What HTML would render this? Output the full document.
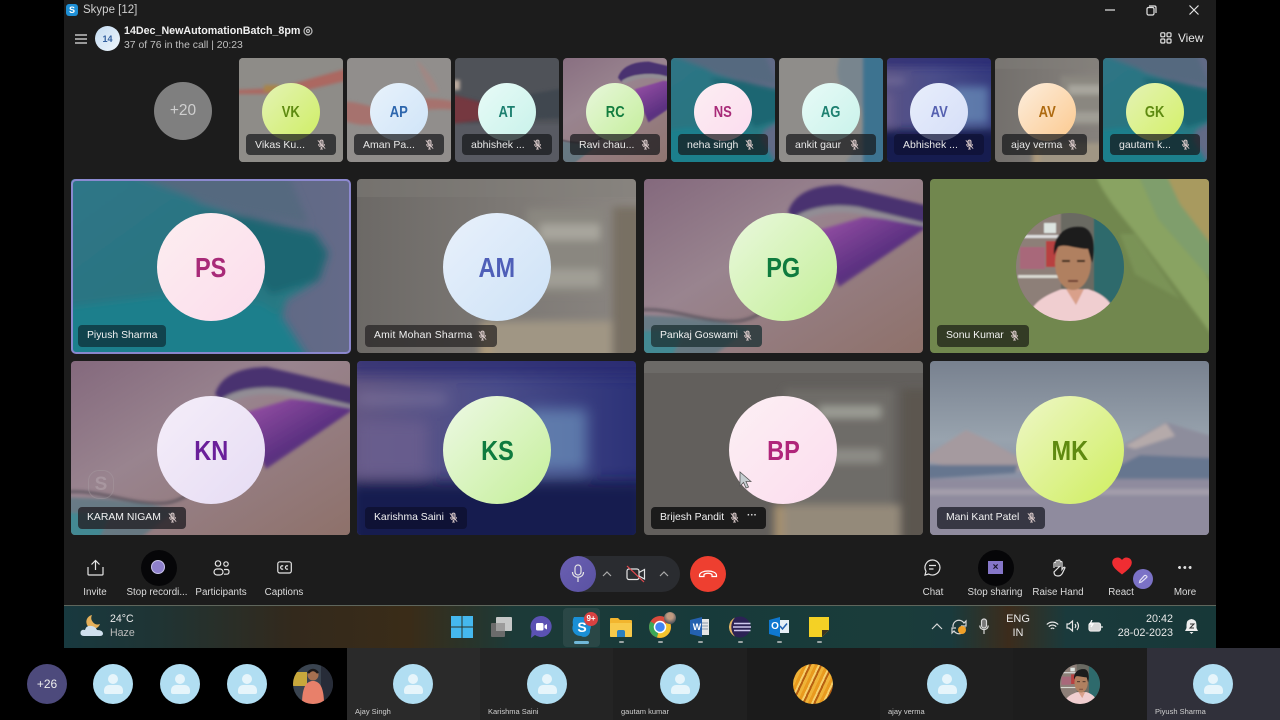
<!DOCTYPE html>
<html><head><meta charset="utf-8"><style>
html,body{margin:0;padding:0;width:1280px;height:720px;overflow:hidden;background:#000;font-family:"Liberation Sans",sans-serif}
.a,.t,.c,.l,.m,.tb{position:absolute}
.a{white-space:nowrap}
svg{display:block}
.t{border-radius:4px;overflow:hidden}
.t svg{position:absolute;left:0;top:0;width:100%;height:100%}
.c{border-radius:50%;display:flex;align-items:center;justify-content:center;font-weight:bold}
.c span{display:inline-block;transform:scaleX(.84);position:relative;top:1px}
.big{width:108px;height:108px;font-size:28px}
.sm{width:58px;height:58px;font-size:15.5px}
.l{background:rgba(22,24,26,.72);border-radius:4px;color:#f2f2f2;white-space:nowrap;box-sizing:border-box}
.bl{height:22px;font-size:10.4px;line-height:22px;padding-left:9px}
.sl{height:21px;width:90px;font-size:10.5px;line-height:22px;padding-left:9px;color:#e8e8e8}
.m{width:11px;height:11px;color:#d9c9c9}
.tb{color:#dcdcdc;font-size:9.8px;text-align:center;white-space:nowrap;top:587px;transform:translateX(-50%)}
.n{position:absolute;color:#d0d0d0;font-size:7.5px;top:707px;white-space:nowrap}
.p{position:absolute;width:40px;height:40px;top:664px;border-radius:50%;background:#b1def2;overflow:hidden}
.p i{position:absolute;left:15px;top:10px;width:10px;height:10px;border-radius:50%;background:#e6f5fb}
.p b{position:absolute;left:10.5px;top:21px;width:19px;height:9px;border-radius:5px 5px 2px 2px;background:#e6f5fb}
.ic{position:absolute;fill:none;stroke:#e4e4e4;stroke-width:1.2}
.dot{position:absolute;top:641px;width:5px;height:2px;border-radius:1px;background:#9aa4a4}
</style></head><body>

<svg width="0" height="0" style="position:absolute">
<defs>
<filter id="b1"><feGaussianBlur stdDeviation=".8"/></filter>
<filter id="b2"><feGaussianBlur stdDeviation="1.5"/></filter>
<filter id="b3" x="-20%" y="-20%" width="140%" height="140%"><feGaussianBlur stdDeviation="4"/></filter>
<filter id="b8" x="-30%" y="-30%" width="160%" height="160%"><feGaussianBlur stdDeviation="7"/></filter>
<symbol id="mic" viewBox="0 0 12 12"><g fill="none" stroke="currentColor" stroke-width="1"><rect x="4.3" y="1.2" width="3.4" height="6" rx="1.7" fill="currentColor" fill-opacity=".45"/><path d="M2.8 5.6c0 4.2 6.4 4.2 6.4 0M6 9v2M4.4 11h3.2M2 1.5l8 9"/></g></symbol>

<linearGradient id="gTeal" x1="0" y1="0" x2="1" y2="0"><stop offset="0" stop-color="#56697f"/><stop offset="1" stop-color="#646a88"/></linearGradient>
<linearGradient id="gTeal2" x1="0" y1="0" x2="1" y2="1"><stop offset="0" stop-color="#2f7688"/><stop offset=".55" stop-color="#2a7480"/><stop offset="1" stop-color="#1f8088"/></linearGradient>
<linearGradient id="gPur" x1="0" y1="0" x2="1" y2="1"><stop offset="0" stop-color="#84697d"/><stop offset=".4" stop-color="#99848f"/><stop offset="1" stop-color="#8e716a"/></linearGradient>
<linearGradient id="gSw" x1="0" y1="0" x2="1" y2="1"><stop offset="0" stop-color="#9c52a8"/><stop offset=".55" stop-color="#5a3080"/><stop offset="1" stop-color="#6a4a80" stop-opacity=".2"/></linearGradient>
<linearGradient id="gBlue" x1="0" y1="0" x2="1" y2="0"><stop offset="0" stop-color="#625683"/><stop offset=".5" stop-color="#4a4d8a"/><stop offset="1" stop-color="#2c3278"/></linearGradient>
<linearGradient id="gRoom" x1="0" y1="0" x2="1" y2="0"><stop offset="0" stop-color="#6c6966"/><stop offset="1" stop-color="#8b8681"/></linearGradient>
<linearGradient id="gMt" x1="0" y1="0" x2="0" y2="1"><stop offset="0" stop-color="#78818f"/><stop offset=".45" stop-color="#98a3ae"/><stop offset=".65" stop-color="#8c93a5"/><stop offset="1" stop-color="#8b8598"/></linearGradient>

<g id="teal"><rect width="279" height="174" fill="url(#gTeal)"/><g filter="url(#b3)"><path d="M-10 -10H75L130 24 174 38 244 54 257 74 248 101 215 121 211 138 240 184H-10Z" fill="url(#gTeal2)"/><path d="M50 -10H215L238 45 174 34 130 22 75 0Z" fill="#54697f"/><path d="M125 34 178 38 244 55 257 74 248 101 200 116 180 90Z" fill="#1e6672"/><path d="M-10 128 90 116 190 124 211 138 240 184H-10Z" fill="#1f7f8c"/></g></g>

<g id="purple"><rect width="279" height="174" fill="url(#gPur)"/><g filter="url(#b2)"><path d="M289 44 195 108 172 52 220 38Z" fill="url(#gSw)"/><path d="M144 33C150 14 170 6 196 6L289 28V46L210 30C185 26 165 32 150 40Z" fill="#4a3070"/><path d="M150 38C165 28 190 24 215 28L289 46V49L215 35C190 31 170 35 155 43Z" fill="#928d94"/><path d="M-10 136 37 138 81 144 105 150 60 184H-10Z" fill="#4a7480" opacity=".6"/><path d="M-10 152H40L25 184H-10Z" fill="#35909a" opacity=".7"/><path d="M-5 131C30 128 60 145 95 142 110 140 120 132 125 128" fill="none" stroke="#4a4450" stroke-width="2"/></g></g>

<g id="blue"><rect width="279" height="174" fill="url(#gBlue)"/><g filter="url(#b8)"><rect x="-10" y="-10" width="300" height="24" fill="#2a2a70" opacity=".75"/><rect x="0" y="35" width="90" height="6" fill="#9a90b0" opacity=".7"/><rect x="170" y="48" width="60" height="62" fill="#7aa8cc" opacity=".55"/><rect x="-10" y="120" width="300" height="70" fill="#181e50"/><rect x="0" y="60" width="70" height="55" fill="#6c6090" opacity=".7"/></g></g>

<g id="room"><rect width="279" height="174" fill="url(#gRoom)"/><rect width="279" height="18" fill="#83807b" opacity=".4"/><g filter="url(#b3)"><rect x="170" y="30" width="76" height="84" fill="#8a8780"/><rect x="183" y="45" width="60" height="16" fill="#a8a69d"/><rect x="183" y="90" width="60" height="18" fill="#a09e95"/><rect x="256" y="28" width="30" height="160" fill="#786f64"/><rect x="125" y="142" width="130" height="40" fill="#a09684"/><rect x="123" y="146" width="12" height="36" fill="#ad9a7c"/></g></g>

<g id="room2"><rect width="279" height="174" fill="#625f5c"/><rect width="279" height="12" fill="#6c6a67"/><g filter="url(#b3)"><rect x="140" y="28" width="110" height="120" fill="#6e6c68"/><rect x="175" y="45" width="62" height="12" fill="#9b9c94"/><rect x="170" y="88" width="67" height="14" fill="#8d8c86"/><rect x="258" y="28" width="28" height="160" fill="#5c5750"/><rect x="130" y="144" width="126" height="40" fill="#948a7a"/><rect x="130" y="144" width="10" height="40" fill="#a59070"/></g></g>

<g id="green"><rect width="279" height="174" fill="#71874e"/><g filter="url(#b2)"><path d="M165 -5H215L285 110V160L210 60C195 40 175 20 165 -5Z" fill="#89a362"/><path d="M208 -5H238L285 40V105L228 40Z" fill="#7f9e6c"/><path d="M236 -5H285V70L250 25Z" fill="#a89a5e"/><path d="M190 55 205 55 250 120 205 95Z" fill="#7a9356"/></g></g>

<g id="mount"><rect width="279" height="174" fill="url(#gMt)"/><g filter="url(#b2)"><path d="M-5 100V96L36 69 60 80 88 96 100 110 40 110Z" fill="#a59a9f"/><path d="M-5 104H88L85 112 -5 118Z" fill="#66768f"/><path d="M190 110 195 83 236 61 258 68 285 76V110Z" fill="#8d8d9c"/><path d="M195 85 236 62 245 75 205 88Z" fill="#b5aaaa"/><path d="M175 112 210 94 285 97V120H175Z" fill="#66768f"/><rect x="-5" y="118" width="290" height="60" fill="#8f8b9e"/><rect x="-5" y="128" width="290" height="6" fill="#a39eab"/></g></g>

<g id="sonu"><rect width="108" height="108" fill="#6a6a62"/><g filter="url(#b1)"><rect x="-3" y="-3" width="48" height="114" fill="#8d7f78"/><rect x="5" y="22" width="38" height="3" fill="#ddd"/><rect x="2" y="62" width="42" height="3" fill="#d8d8d0"/><rect x="4" y="34" width="25" height="22" fill="#a8687a"/><rect x="30" y="28" width="12" height="26" fill="#b84040"/><rect x="28" y="10" width="12" height="10" fill="#dde4e0"/><rect x="78" y="-3" width="33" height="114" fill="#2f6a6c"/><path d="M12 111C12 90 30 82 46 76L72 76C90 82 100 92 100 111Z" fill="#f0ced0"/><path d="M50 76H68L60 92Z" fill="#d9a08a"/><ellipse cx="57" cy="50" rx="18" ry="27" fill="#b08060"/><path d="M38 42C36 20 52 12 66 14 78 16 80 35 76 50L72 36C60 36 48 30 42 34Z" fill="#1c1a1c"/><path d="M46 48h8M61 48h8" stroke="#2a1a18" stroke-width="2"/><path d="M52 68h10" stroke="#6e3c30" stroke-width="2"/></g></g>
</defs>
</svg>

<!-- window -->
<div class="a" style="left:64px;top:0;width:1152px;height:606px;background:#1c1c1c"></div>

<!-- title bar -->
<div class="a" style="left:66px;top:4px;width:12px;height:12px;border-radius:3px;background:#1e8fd5;color:#fff;font:bold 9px/12px 'Liberation Sans',sans-serif;text-align:center">S</div>
<div class="a" style="left:83px;top:3px;font-size:11.5px;line-height:15px;color:#cfcfcf">Skype [12]</div>
<svg class="ic" style="left:1105px;top:5px" width="10" height="10"><path d="M0 5H10"/></svg>
<svg class="ic" style="left:1146px;top:5px" width="11" height="11"><rect x="1" y="2.5" width="7" height="7.5" rx="1.5"/><path d="M3 1H8.5Q10 1 10 2.5V8"/></svg>
<svg class="ic" style="left:1189px;top:5px" width="10" height="10"><path d="M.5 .5l9 9M9.5 .5l-9 9"/></svg>

<!-- header -->
<svg class="ic" style="left:75px;top:34px" width="12" height="10"><path d="M0 1H12M0 5H12M0 9H12"/></svg>
<div class="c" style="left:95px;top:26px;width:25px;height:25px;background:linear-gradient(135deg,#c4dcf2,#eef5fb);color:#33609f;font-size:9px">14</div>
<div class="a" style="left:124px;top:24px;font-size:10.7px;line-height:15px;font-weight:bold;color:#f0f0f0">14Dec_NewAutomationBatch_8pm</div>
<svg class="ic" style="left:303px;top:26px;stroke:#bdbdbd" width="10" height="10"><circle cx="5" cy="5" r="4"/><circle cx="5" cy="5" r="1.5"/></svg>
<div class="a" style="left:124px;top:39px;font-size:10.4px;line-height:14px;color:#c0c0c0">37 of 76 in the call | 20:23</div>
<svg class="ic" style="left:1160px;top:32px" width="12" height="12"><rect x=".8" y=".8" width="4" height="4" rx="1"/><rect x="7" y=".8" width="4" height="4" rx="1"/><rect x=".8" y="7" width="4" height="4" rx="1"/><rect x="7" y="7" width="4" height="4" rx="1"/></svg>
<div class="a" style="left:1178px;top:31px;font-size:11.8px;line-height:15px;color:#e6e6e6">View</div>

<!-- +20 -->
<div class="c" style="left:154px;top:82px;width:58px;height:58px;background:#7f7f7f;color:#cfcfcf;font-size:15.5px;font-weight:normal">+20</div>

<!-- thumbnails -->
<div class="t" style="left:239px;top:58px;width:104px;height:104px;background:#8e8c88"><svg viewBox="0 0 104 104"><rect width="104" height="104" fill="#8e8c88"/><g filter="url(#b2)"><path d="M-5 32 40 30 60 24 110 10V22L60 34 30 36 -5 36Z" fill="#b0605a" opacity=".85"/><path d="M25 27h15v7H25Z" fill="#a8844a"/></g></svg></div>
<div class="c sm" style="left:262px;top:83px;background:linear-gradient(135deg,#e4f3b6,#cfee63);color:#5e8a10"><span>VK</span></div>
<div class="l sl" style="left:246px;top:134px">Vikas Ku...</div><svg class="m" style="left:316px;top:139px"><use href="#mic"/></svg>

<div class="t" style="left:347px;top:58px;width:104px;height:104px"><svg viewBox="0 0 104 104"><rect width="104" height="104" fill="#918e8c"/><g filter="url(#b2)"><path d="M-5 44C15 42 30 56 50 46 70 38 90 40 110 44V52C85 50 70 52 55 58 35 68 15 70 -5 62Z" fill="#ae6a64" opacity=".75"/><path d="M70 2C80 12 88 22 92 34L84 34C78 22 72 12 70 2Z" fill="#a58480" opacity=".7"/></g></svg></div>
<div class="c sm" style="left:370px;top:83px;background:linear-gradient(135deg,#e8f2fb,#cfe4f8);color:#2d66ad"><span>AP</span></div>
<div class="l sl" style="left:354px;top:134px">Aman Pa...</div><svg class="m" style="left:424px;top:139px"><use href="#mic"/></svg>

<div class="t" style="left:455px;top:58px;width:104px;height:104px"><svg viewBox="0 0 104 104"><rect width="104" height="104" fill="#4f5258"/><g filter="url(#b2)"><path d="M-5 36 30 44 110 30V60L60 62 -5 66Z" fill="#3f4750"/><path d="M-5 36 25 44 28 62 -5 66Z" fill="#74383f"/><path d="M-5 22h10v10H-5Z" fill="#b8a89c"/><rect x="-5" y="66" width="114" height="42" fill="#585a62"/></g></svg></div>
<div class="c sm" style="left:478px;top:83px;background:linear-gradient(135deg,#e8fbf7,#c8f2ea);color:#1d8070"><span>AT</span></div>
<div class="l sl" style="left:462px;top:134px">abhishek ...</div><svg class="m" style="left:532px;top:139px"><use href="#mic"/></svg>

<div class="t" style="left:563px;top:58px;width:104px;height:104px"><svg viewBox="52 0 174 174" preserveAspectRatio="none"><use href="#purple"/></svg></div>
<div class="c sm" style="left:586px;top:83px;background:linear-gradient(135deg,#e8f7dc,#c4ee9a);color:#127c3e"><span>RC</span></div>
<div class="l sl" style="left:570px;top:134px">Ravi chau...</div><svg class="m" style="left:640px;top:139px"><use href="#mic"/></svg>

<div class="t" style="left:671px;top:58px;width:104px;height:104px"><svg viewBox="60 0 174 174" preserveAspectRatio="none"><use href="#teal"/></svg></div>
<div class="c sm" style="left:694px;top:83px;background:linear-gradient(135deg,#fdeef2,#fbdcef);color:#a82a78"><span>NS</span></div>
<div class="l sl" style="left:678px;top:134px;color:#eaeaea">neha singh</div><svg class="m" style="left:744px;top:139px"><use href="#mic"/></svg>

<div class="t" style="left:779px;top:58px;width:104px;height:104px"><svg viewBox="0 0 104 104"><rect width="104" height="104" fill="#8f8d8a"/><g filter="url(#b2)"><path d="M62 -5H110V110H62C80 90 88 70 82 50 70 30 50 30 62 -5Z" fill="#6d8290" opacity=".7"/><rect x="84" y="-5" width="25" height="114" fill="#3c7390"/></g></svg></div>
<div class="c sm" style="left:802px;top:83px;background:linear-gradient(135deg,#e8fbf7,#c8f2ea);color:#1d8070"><span>AG</span></div>
<div class="l sl" style="left:786px;top:134px">ankit gaur</div><svg class="m" style="left:849px;top:139px"><use href="#mic"/></svg>

<div class="t" style="left:887px;top:58px;width:104px;height:104px"><svg viewBox="60 0 174 174" preserveAspectRatio="none"><use href="#blue"/></svg></div>
<div class="c sm" style="left:910px;top:83px;background:linear-gradient(135deg,#e8eefb,#d5def8);color:#5560b0"><span>AV</span></div>
<div class="l sl" style="left:894px;top:134px;background:rgba(14,16,50,.72)">Abhishek ...</div><svg class="m" style="left:964px;top:139px"><use href="#mic"/></svg>

<div class="t" style="left:995px;top:58px;width:104px;height:104px"><svg viewBox="60 0 174 174" preserveAspectRatio="none"><use href="#room"/></svg></div>
<div class="c sm" style="left:1018px;top:83px;background:linear-gradient(135deg,#fdeede,#fbc98e);color:#ae6a10"><span>AV</span></div>
<div class="l sl" style="left:1002px;top:134px;width:85px">ajay verma</div><svg class="m" style="left:1067px;top:139px"><use href="#mic"/></svg>

<div class="t" style="left:1103px;top:58px;width:104px;height:104px"><svg viewBox="60 0 174 174" preserveAspectRatio="none"><use href="#teal"/></svg></div>
<div class="c sm" style="left:1126px;top:83px;background:linear-gradient(135deg,#e4f3b6,#d4f066);color:#5e8a10"><span>GK</span></div>
<div class="l sl" style="left:1110px;top:134px">gautam k...</div><svg class="m" style="left:1180px;top:139px"><use href="#mic"/></svg>

<!-- main tiles -->
<div class="t" style="left:71px;top:179px;width:279px;height:174px"><svg viewBox="0 0 279 174" preserveAspectRatio="none"><use href="#teal"/></svg></div>
<div class="a" style="left:71px;top:179px;width:276px;height:171px;border:2px solid #8f8bd4;border-radius:5px;opacity:.95"></div>
<div class="c big" style="left:157px;top:213px;background:linear-gradient(135deg,#fdeef0,#fbdcec);color:#a82a78"><span>PS</span></div>
<div class="l bl" style="left:78px;top:325px;width:88px;background:rgba(14,44,52,.72)">Piyush Sharma</div>

<div class="t" style="left:357px;top:179px;width:279px;height:174px"><svg viewBox="0 0 279 174" preserveAspectRatio="none"><use href="#room"/></svg></div>
<div class="c big" style="left:443px;top:213px;background:linear-gradient(135deg,#e9f1fb,#cde2f7);color:#4f5fb8"><span>AM</span></div>
<div class="l bl" style="left:365px;top:325px;width:132px;background:rgba(40,38,38,.75);letter-spacing:.22px">Amit Mohan Sharma</div><svg class="m" style="left:477px;top:330px"><use href="#mic"/></svg>

<div class="t" style="left:644px;top:179px;width:279px;height:174px"><svg viewBox="0 0 279 174" preserveAspectRatio="none"><use href="#purple"/></svg></div>
<div class="c big" style="left:729px;top:213px;background:linear-gradient(135deg,#eaf8de,#c3ef96);color:#0f7b3e"><span>PG</span></div>
<div class="l bl" style="left:651px;top:325px;width:111px;background:rgba(30,50,52,.78)">Pankaj Goswami</div><svg class="m" style="left:742px;top:330px"><use href="#mic"/></svg>

<div class="t" style="left:930px;top:179px;width:279px;height:174px"><svg viewBox="0 0 279 174" preserveAspectRatio="none"><use href="#green"/></svg></div>
<div class="a" style="left:1016px;top:213px;width:108px;height:108px;border-radius:50%;overflow:hidden"><svg width="108" height="108"><use href="#sonu"/></svg></div>
<div class="l bl" style="left:937px;top:325px;width:92px;background:rgba(40,46,30,.85)">Sonu Kumar</div><svg class="m" style="left:1009px;top:330px"><use href="#mic"/></svg>

<div class="t" style="left:71px;top:361px;width:279px;height:174px"><svg viewBox="0 0 279 174" preserveAspectRatio="none"><use href="#purple"/></svg></div>
<div class="a" style="left:88px;top:470px;width:26px;height:29px;border:1.5px solid rgba(170,160,165,.4);border-radius:11px;box-sizing:border-box;color:rgba(190,180,185,.4);font:bold 19px/27px 'Liberation Sans',sans-serif;text-align:center">S</div>
<div class="c big" style="left:157px;top:396px;background:linear-gradient(135deg,#f5eef9,#e6dcf4);color:#6a1f9a"><span>KN</span></div>
<div class="l bl" style="left:78px;top:507px;width:108px;background:rgba(35,32,38,.8)">KARAM NIGAM</div><svg class="m" style="left:167px;top:512px"><use href="#mic"/></svg>

<div class="t" style="left:357px;top:361px;width:279px;height:174px"><svg viewBox="0 0 279 174" preserveAspectRatio="none"><use href="#blue"/></svg></div>
<div class="c big" style="left:443px;top:396px;background:linear-gradient(135deg,#eef9e6,#c4ef98);color:#0f7b3e"><span>KS</span></div>
<div class="l bl" style="left:365px;top:507px;width:102px;background:rgba(14,16,46,.78)">Karishma Saini</div><svg class="m" style="left:448px;top:512px"><use href="#mic"/></svg>

<div class="t" style="left:644px;top:361px;width:279px;height:174px"><svg viewBox="0 0 279 174" preserveAspectRatio="none"><use href="#room2"/></svg></div>
<div class="c big" style="left:729px;top:396px;background:linear-gradient(135deg,#fdf0f4,#fbdcee);color:#b0257a"><span>BP</span></div>
<svg class="a" style="left:739px;top:471px" width="13" height="19"><path d="M1 1V15L4.5 11.5 7 17 9.5 16 7 10.5H12Z" fill="#c5cdd0" stroke="#555" stroke-width=".8"/></svg>
<div class="l bl" style="left:651px;top:507px;width:115px;background:rgba(20,20,20,.9)">Brijesh Pandit</div><svg class="m" style="left:729px;top:512px"><use href="#mic"/></svg>
<div class="a" style="left:747px;top:510px;color:#ddd;font-size:10px;line-height:12px;font-weight:bold">···</div>

<div class="t" style="left:930px;top:361px;width:279px;height:174px"><svg viewBox="0 0 279 174" preserveAspectRatio="none"><use href="#mount"/></svg></div>
<div class="c big" style="left:1016px;top:396px;background:linear-gradient(135deg,#eef7c8,#cfee5e);color:#5f8a10"><span>MK</span></div>
<div class="l bl" style="left:937px;top:507px;width:108px;background:rgba(40,40,52,.85)">Mani Kant Patel</div><svg class="m" style="left:1026px;top:512px"><use href="#mic"/></svg>

<!-- toolbar left -->
<svg class="ic" style="left:87px;top:559px" width="17" height="17"><path d="M1 8V15Q1 16 2 16H15Q16 16 16 15V8M8.5 11V1.5M4.5 5.5 8.5 1.5 12.5 5.5"/></svg>
<div class="tb" style="left:95px">Invite</div>
<div class="a" style="left:141px;top:550px;width:36px;height:36px;border-radius:50%;background:#060608"></div>
<div class="a" style="left:151px;top:560px;width:12px;height:12px;border-radius:50%;background:#8e80cc;border:1.5px solid #c9c4ea"></div>
<div class="tb" style="left:157px">Stop recordi...</div>
<svg class="ic" style="left:213px;top:560px" width="17" height="16"><circle cx="5" cy="3.5" r="2.7"/><circle cx="13" cy="4" r="2.2"/><rect x="1" y="9" width="9" height="6" rx="3"/><path d="M11 9.5h3q2 0 2 2.2t-2 2.5h-3"/></svg>
<div class="tb" style="left:221px">Participants</div>
<svg class="ic" style="left:277px;top:561px" width="15" height="13"><rect x=".8" y=".8" width="13.5" height="11.2" rx="2"/><path d="M6.2 5Q4 4.2 3.6 6.4 4 8.8 6.2 8M11 5Q8.8 4.2 8.4 6.4 8.8 8.8 11 8"/></svg>
<div class="tb" style="left:284px">Captions</div>

<!-- center controls -->
<div class="a" style="left:578px;top:556px;width:102px;height:36px;border-radius:0 18px 18px 0;background:#2a2c30"></div>
<div class="a" style="left:560px;top:556px;width:36px;height:36px;border-radius:50%;background:linear-gradient(135deg,#6a5fb2,#5a52a2)"></div>
<svg class="ic" style="left:571px;top:564px" width="14" height="20"><rect x="4" y="1" width="6" height="10" rx="3"/><path d="M1.5 8C1.5 15 12.5 15 12.5 8M7 13V18"/></svg>
<svg class="ic" style="left:602px;top:571px;stroke:#aaa" width="10" height="6"><path d="M1 5 5 1 9 5"/></svg>
<svg class="ic" style="left:626px;top:564px" width="20" height="20"><rect x="1" y="5" width="12" height="10.5" rx="2"/><path d="M13 8.5 18.5 5.5V15L13 12"/><path d="M1 2 18 18" stroke="#e5484d"/></svg>
<svg class="ic" style="left:659px;top:571px;stroke:#aaa" width="10" height="6"><path d="M1 5 5 1 9 5"/></svg>
<div class="a" style="left:690px;top:556px;width:36px;height:36px;border-radius:50%;background:#ee3f30"></div>
<svg class="a" style="left:698px;top:569px" width="20" height="10"><path d="M1.5 6.5C1.5 .5 18.5 .5 18.5 6.5V7.5H14V5.5C12 3.800 8 3.800 6 5.5V7.5H1.5Z" fill="none" stroke="#fff" stroke-width="1.2"/></svg>

<!-- toolbar right -->
<svg class="ic" style="left:924px;top:559px" width="17" height="17"><path d="M8.5 1A7.5 7.5 0 1 1 4.7 15L1 16 2 12.3A7.5 7.5 0 0 1 8.5 1ZM5 6.5H12M5 10H9.5"/></svg>
<div class="tb" style="left:933px">Chat</div>
<div class="a" style="left:978px;top:550px;width:36px;height:36px;border-radius:50%;background:#060608"></div>
<div class="a" style="left:988px;top:561px;width:15px;height:13px;background:#8576c8;color:#181428;font:bold 10px/13px 'Liberation Sans',sans-serif;text-align:center">×</div>
<div class="tb" style="left:995px">Stop sharing</div>
<svg class="ic" style="left:1051px;top:559px" width="15" height="18"><path d="M3 9V4.5Q3 3.3 4 3.3T5 4.5V8M5 7V2.5Q5 1.3 6 1.3T7 2.5V8M7 7V2Q7 1 8 1T9 2V8M9 7V3.5Q9 2.5 10 2.5T11 3.5V10.5L12.5 8.5Q13.5 7.8 14 8.8L11.5 14Q10 17 7 17 3 17 3 13Z"/></svg>
<div class="tb" style="left:1058px">Raise Hand</div>
<svg class="a" style="left:1112px;top:557px" width="20" height="18"><path d="M10 17.5C5 13.5 .2 10 .2 5.5 .2 2.3 3 .5 5.5 .5 7.5 .5 9 1.5 10 3 11 1.5 12.5 .5 14.5 .5 17 .5 19.8 2.3 19.8 5.5 19.8 10 15 13.5 10 17.5Z" fill="#f02d32"/></svg>
<div class="tb" style="left:1121px">React</div>
<div class="a" style="left:1133px;top:569px;width:20px;height:20px;border-radius:50%;background:#7b72c6"></div>
<svg class="ic" style="left:1138px;top:574px;stroke:#e4e2f5" width="10" height="10"><path d="M1.5 8.5 2 6.5 6.5 1.5Q7.5 1 8.5 2T8.5 3.5L3.5 8Z"/></svg>
<div class="a" style="left:1178px;top:566px;width:14px;height:3px;background:radial-gradient(circle at 1.5px 1.5px,#ddd 1.4px,transparent 1.5px) 0 0/5.3px 3px repeat-x"></div>
<div class="tb" style="left:1185px">More</div>

<!-- taskbar -->
<div class="a" style="left:64px;top:605px;width:1152px;height:43px;background:linear-gradient(90deg,#18393f 0,#1f3434 8%,#33291c 20%,#3a2c18 30%,#1c3a38 39%,#173a3a 55%,#1a3c3a 72%,#1a3a3c 77%,#3c2c1c 82%,#1a3a3c 87%,#173838 100%);border-top:1px solid #5f665c;box-sizing:border-box"></div>
<svg class="a" style="left:80px;top:615px" width="24" height="23"><path d="M12 0A7 7 0 1 0 20 9 6.5 6.5 0 0 1 12 0Z" fill="#e5b05a"/><path d="M4 21Q0 21 .5 17 1.5 14 5 15 6 10 12 11 16 12 17 15 23 15 23 19 22.5 21 20 21Z" fill="#d0e0ee"/></svg>
<div class="a" style="left:110px;top:612px;font-size:10.6px;line-height:14px;color:#ececec">24°C</div>
<div class="a" style="left:110px;top:626px;font-size:10.6px;line-height:14px;color:#bcbcbc">Haze</div>

<div class="a" style="left:563px;top:608px;width:37px;height:39px;border-radius:4px;background:rgba(255,255,255,.07)"></div>
<svg class="a" style="left:451px;top:616px" width="22" height="22"><path d="M0 0H10.5V10.5H0ZM11.5 0H22V10.5H11.5ZM0 11.5H10.5V22H0ZM11.5 11.5H22V22H11.5Z" fill="#45b8ee"/></svg>
<svg class="a" style="left:491px;top:616px" width="22" height="22"><rect y="7" width="14" height="14" rx="1" fill="#6b6b6b"/><rect x="5" y="1" width="16" height="14" rx="1" fill="#d5d5d5" opacity=".92"/><rect x="5" y="7" width="9" height="8" fill="#9c9c9c"/></svg>
<svg class="a" style="left:530px;top:616px" width="22" height="22"><path d="M11 0A10.5 10.5 0 1 1 5 19L1 22 1.5 15A10.5 10.5 0 0 1 11 0Z" fill="#5b52b3"/><rect x="6" y="7" width="7.5" height="7.5" rx="1.5" fill="#fff"/><path d="M14.5 9.5 17 8V13.5L14.5 12Z" fill="#fff"/></svg>
<svg class="a" style="left:572px;top:616px" width="20" height="22"><path d="M2 1H10A9 9 0 0 1 18 14 6 6 0 0 1 9 20 8 8 0 0 1 1 9Q0 4 2 1Z" fill="#1a8fd6"/></svg>
<div class="a" style="left:574px;top:618px;width:16px;text-align:center;color:#fff;font:bold 14px/18px 'Liberation Sans',sans-serif">S</div>
<div class="a" style="left:584px;top:612px;width:14px;height:14px;border-radius:50%;background:#d94141;color:#fff;font:bold 8px/14px 'Liberation Sans',sans-serif;text-align:center">9+</div>
<div class="a" style="left:574px;top:641px;width:15px;height:3px;border-radius:2px;background:#70b8d8"></div>
<svg class="a" style="left:610px;top:617px" width="22" height="20"><path d="M0 2Q0 1 1 1H8L10 3H21Q22 3 22 4V19Q22 20 21 20H1Q0 20 0 19Z" fill="#f2b52e"/><rect y="6" width="22" height="14" rx="1" fill="#f7c94a"/><path d="M7 20V15Q7 13 9 13H13Q15 13 15 15V20Z" fill="#2a7fbf"/></svg>
<div class="dot" style="left:619px"></div>
<svg class="a" style="left:649px;top:616px" width="22" height="22"><circle cx="11" cy="11" r="11" fill="#d94b3d"/><path d="M11 11 1.5 5.5A11 11 0 0 0 8 21.5Z" fill="#3aa757"/><path d="M11 11 20.5 5.5A11 11 0 0 1 8 21.5Z" fill="#f5c42c"/><circle cx="11" cy="11" r="5.5" fill="#4285f4" stroke="#fff" stroke-width="1.5"/></svg>
<div class="a" style="left:664px;top:612px;width:12px;height:12px;border-radius:50%;background:radial-gradient(circle at 50% 35%,#c09a80 30%,#5a5a60 70%)"></div>
<div class="dot" style="left:658px"></div>
<svg class="a" style="left:690px;top:617px" width="20" height="20"><rect x="7" y="2" width="12" height="16" fill="#e6e6e6"/><path d="M9 6H18M9 9H18M9 12H18" stroke="#8a9aaa"/><path d="M0 3 12 0V20L0 17Z" fill="#2461b0"/></svg>
<div class="a" style="left:692px;top:622px;width:10px;text-align:center;color:#fff;font:bold 9px/10px 'Liberation Sans',sans-serif">W</div>
<div class="dot" style="left:698px"></div>
<svg class="a" style="left:729px;top:616px" width="22" height="22"><circle cx="11" cy="11" r="10.5" fill="#2c2255"/><path d="M6 1.5A10.5 10.5 0 0 0 6 20.5 14 14 0 0 1 6 1.5Z" fill="#e2b465"/><path d="M5 7.5H21.5M4 11H22M5 14.5H21.5" stroke="#cfc8ee" stroke-width="1.5"/></svg>
<div class="dot" style="left:738px"></div>
<svg class="a" style="left:769px;top:617px" width="20" height="20"><rect x="7" y="3" width="13" height="13" fill="#e6eef5"/><path d="M11 9 13.5 12 18 6.5" fill="none" stroke="#2461b0" stroke-width="1.5"/><path d="M0 3 11 0V20L0 17Z" fill="#0f78d0"/></svg>
<div class="a" style="left:770px;top:622px;width:10px;text-align:center;color:#fff;font:bold 10px/10px 'Liberation Sans',sans-serif">O</div>
<div class="dot" style="left:777px"></div>
<svg class="a" style="left:809px;top:617px" width="20" height="20"><path d="M0 0H20V13L13 20H0Z" fill="#f4d125"/><path d="M13 20V13H20Z" fill="#3a3420"/></svg>
<div class="dot" style="left:817px"></div>

<svg class="ic" style="left:931px;top:623px;stroke:#d8d8d8" width="12" height="7"><path d="M1 6 6 1 11 6"/></svg>
<svg class="ic" style="left:951px;top:618px;stroke:#d8d8d8" width="16" height="17"><path d="M2 9A6 6 0 0 1 13 5L15 3V8H10M14 9A6 6 0 0 1 3 13L1 15V10H5"/></svg>
<div class="a" style="left:958px;top:626px;width:8px;height:8px;border-radius:50%;background:#f0a028"></div>
<svg class="ic" style="left:979px;top:618px;stroke:#d8d8d8" width="10" height="17"><rect x="2.5" y="1" width="5" height="9" rx="2.5" fill="#777"/><path d="M.8 7.5C.8 13 9.2 13 9.2 7.5M5 12V16"/></svg>
<div class="a" style="left:1006px;top:612px;width:24px;text-align:center;font-size:11px;line-height:14px;color:#e8e8e8">ENG<br>IN</div>
<svg class="ic" style="left:1046px;top:621px;stroke:#e8e8e8" width="13" height="10"><path d="M.8 3.5A8 8 0 0 1 12.2 3.5M2.8 5.7A5 5 0 0 1 10.2 5.7M4.8 7.8A2.5 2.5 0 0 1 8.2 7.8"/></svg>
<svg class="ic" style="left:1066px;top:619px;stroke:#e8e8e8" width="15" height="14"><path d="M1 5V9H3L6.5 12V2L3 5ZM9 5Q10.5 7 9 9M11 3Q14 7 11 11"/></svg>
<svg class="ic" style="left:1088px;top:620px;stroke:#e8e8e8" width="15" height="12"><rect x="1" y="3" width="11.5" height="8" rx="2" fill="#d8d8d8"/><path d="M14 6V8"/><path d="M4 0 2 4H5L3 7" stroke="#fff"/></svg>
<div class="a" style="left:1113px;top:612px;width:60px;text-align:right;font-size:10.8px;line-height:14px;color:#e8e8e8">20:42</div>
<div class="a" style="left:1113px;top:626px;width:60px;text-align:right;font-size:10.8px;line-height:14px;color:#e8e8e8">28-02-2023</div>
<svg class="a" style="left:1185px;top:618px" width="13" height="16"><path d="M6.5 1Q1.5 1.5 1.5 7V10L0 13H13L11.5 10V7Q11.5 1.5 6.5 1ZM4.5 14H8.5L6.5 16Z" fill="#eee"/><path d="M5 6H9L5 10H9" stroke="#333" fill="none"/></svg>

<!-- bottom strip -->
<div class="a" style="left:347px;top:648px;width:133px;height:72px;background:#2a2a2a"></div>
<div class="a" style="left:480px;top:648px;width:133px;height:72px;background:#242424"></div>
<div class="a" style="left:613px;top:648px;width:134px;height:72px;background:#202020"></div>
<div class="a" style="left:747px;top:648px;width:133px;height:72px;background:#1b1b1b"></div>
<div class="a" style="left:880px;top:648px;width:133px;height:72px;background:#1f1f1f"></div>
<div class="a" style="left:1013px;top:648px;width:134px;height:72px;background:#1d1d1d"></div>
<div class="a" style="left:1147px;top:648px;width:133px;height:72px;background:#30303a"></div>

<div class="c" style="left:27px;top:664px;width:40px;height:40px;background:#4d4a7c;color:#eee;font-size:12px;font-weight:normal">+26</div>
<div class="p" style="left:93px"><i></i><b></b></div>
<div class="p" style="left:160px"><i></i><b></b></div>
<div class="p" style="left:227px"><i></i><b></b></div>
<div class="a" style="left:293px;top:664px;width:40px;height:40px;border-radius:50%;overflow:hidden"><svg width="40" height="40"><rect width="40" height="40" fill="#3a4450"/><rect y="8" width="14" height="14" fill="#c8a83c"/><rect x="28" y="0" width="12" height="40" fill="#272c38"/><path d="M9 40C9 22 14 17 20 17S31 22 31 40Z" fill="#e8806a"/><circle cx="20" cy="11" r="5.5" fill="#a57050"/><path d="M15 9Q20 3 25 9" fill="none" stroke="#1c1a1a" stroke-width="2.5"/></svg></div>
<div class="p" style="left:393px"><i></i><b></b></div>
<div class="n" style="left:355px">Ajay Singh</div>
<div class="p" style="left:527px"><i></i><b></b></div>
<div class="n" style="left:488px">Karishma Saini</div>
<div class="p" style="left:660px"><i></i><b></b></div>
<div class="n" style="left:621px">gautam kumar</div>
<div class="a" style="left:793px;top:664px;width:40px;height:40px;border-radius:50%;overflow:hidden;background:repeating-linear-gradient(115deg,#e99a1e 0 3px,#f6cf6a 3px 5px,#b76010 5px 7px,#efb338 7px 10px)"></div>
<div class="p" style="left:927px"><i></i><b></b></div>
<div class="n" style="left:888px">ajay verma</div>
<div class="a" style="left:1060px;top:664px;width:40px;height:40px;border-radius:50%;overflow:hidden"><svg width="40" height="40" viewBox="0 0 108 108"><use href="#sonu"/></svg></div>
<div class="p" style="left:1193px"><i></i><b></b></div>
<div class="n" style="left:1155px">Piyush Sharma</div>

</body></html>
